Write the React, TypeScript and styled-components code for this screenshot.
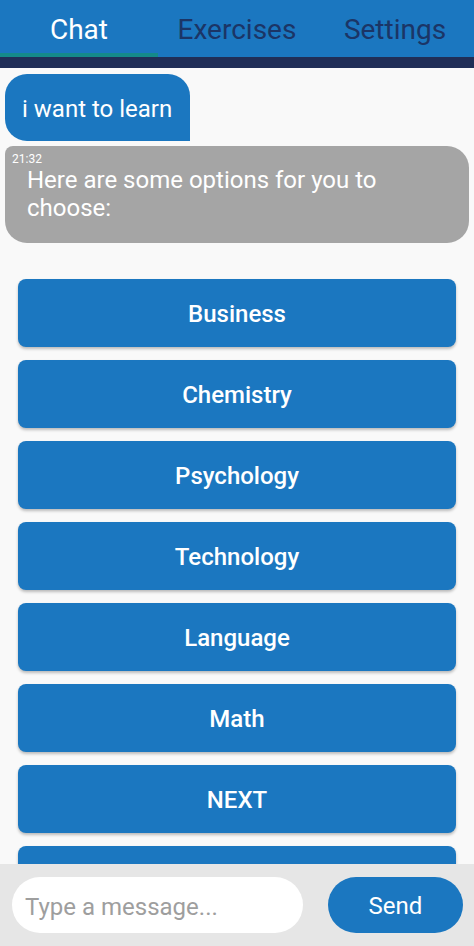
import React from "react";
import styled, { createGlobalStyle } from "styled-components";

const Global = createGlobalStyle`
  html, body { margin: 0; padding: 0; }
  body { font-family: Roboto, "Noto Sans", sans-serif; background: #f9f9f9; }
  * { box-sizing: border-box; }
`;

const Screen = styled.div`
  height: 946px;
  display: flex;
  flex-direction: column;
  overflow: hidden;
  background: #f9f9f9;
`;

const TabBar = styled.div`
  height: 57px;
  background: #1b77c0;
  display: flex;
  flex-shrink: 0;
`;

const Tab = styled.div<{ $active?: boolean }>`
  width: 158px;
  display: flex;
  align-items: center;
  justify-content: center;
  padding-top: 5px;
  font-size: 28px;
  color: ${(p) => (p.$active ? "#ffffff" : "#1b3566")};
  border-bottom: 4px solid ${(p) => (p.$active ? "#148a8a" : "transparent")};
`;

const NavyBand = styled.div`
  height: 11px;
  background: #202e57;
  flex-shrink: 0;
`;

const Messages = styled.div`
  flex: 1;
  min-height: 0;
  overflow: hidden;
  padding: 6px 5px 0;
  display: flex;
  flex-direction: column;
  align-items: flex-start;
`;

const UserBubble = styled.div`
  flex-shrink: 0;
  background: #1b77c0;
  color: #ffffff;
  font-size: 24px;
  height: 67px;
  padding: 3px 17px 0;
  display: flex;
  align-items: center;
  border-radius: 22px 22px 0 22px;
  width: 185px;
`;

const BotBubble = styled.div`
  flex-shrink: 0;
  margin-top: 5px;
  align-self: stretch;
  background: #a5a5a5;
  color: #ffffff;
  border-radius: 8px 22px 22px 22px;
  padding: 6px 20px 12px 7px;
  height: 97px;
`;

const Time = styled.div`
  font-size: 12px;
  line-height: 14px;
`;

const BotText = styled.div`
  font-size: 24px;
  line-height: 28px;
  padding-left: 15px;
`;

const Options = styled.div`
  flex-shrink: 0;
  align-self: stretch;
  margin: 36px 13px 0;
  display: flex;
  flex-direction: column;
  gap: 13px;
`;

const OptionButton = styled.button`
  height: 68px;
  flex-shrink: 0;
  border: none;
  border-radius: 8px;
  padding-top: 3px;
  background: #1b77c0;
  color: #ffffff;
  font-family: Roboto, "Noto Sans", sans-serif;
  font-size: 24px;
  font-weight: 500;
  box-shadow: 0 2px 3px rgba(0, 0, 0, 0.25);
`;

const BottomBar = styled.div`
  height: 82px;
  flex-shrink: 0;
  background: #e6e6e6;
  display: flex;
  align-items: center;
  padding: 0 11px 0 12px;
  gap: 25px;
`;

const Input = styled.input`
  flex: 1;
  min-width: 0;
  height: 56px;
  border: none;
  border-radius: 28px;
  background: #ffffff;
  padding: 3px 13px 0;
  font-family: Roboto, "Noto Sans", sans-serif;
  font-size: 24px;
  color: #333;
  outline: none;
  &::placeholder { color: #9e9e9e; }
`;

const SendButton = styled.button`
  flex-shrink: 0;
  width: 135px;
  height: 56px;
  border: none;
  border-radius: 28px;
  padding-top: 3px;
  background: #1b77c0;
  color: #ffffff;
  font-family: Roboto, "Noto Sans", sans-serif;
  font-size: 24px;
`;

const options = ["Business", "Chemistry", "Psychology", "Technology", "Language", "Math", "NEXT", ""];

export default function App() {
  return (
    <>
      <Global />
      <Screen>
        <TabBar>
          <Tab $active>Chat</Tab>
          <Tab>Exercises</Tab>
          <Tab>Settings</Tab>
        </TabBar>
        <NavyBand />
        <Messages>
          <UserBubble>i want to learn</UserBubble>
          <BotBubble>
            <Time>21:32</Time>
            <BotText>Here are some options for you to choose:</BotText>
          </BotBubble>
          <Options>
            {options.map((o, i) => (
              <OptionButton key={i}>{o}</OptionButton>
            ))}
          </Options>
        </Messages>
        <BottomBar>
          <Input placeholder="Type a message..." />
          <SendButton>Send</SendButton>
        </BottomBar>
      </Screen>
    </>
  );
}
